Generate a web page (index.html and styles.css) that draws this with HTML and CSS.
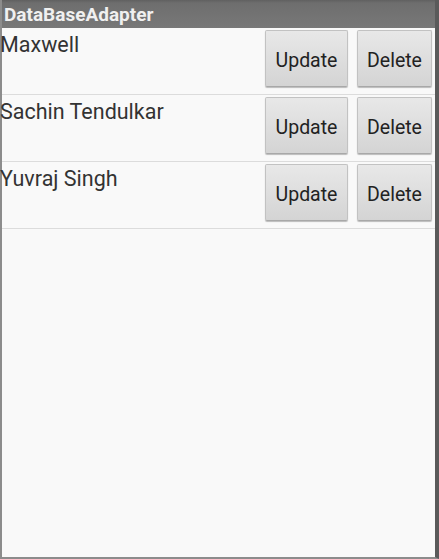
FILE: index.html
```html
<!DOCTYPE html>
<html>
<head>
<meta charset="utf-8">
<link rel="stylesheet" href="styles.css">
</head>
<body>
<div class="screen">
  <div class="titlebar"><span class="title">DataBaseAdapter</span></div>
  <div class="content">
    <div class="row">
      <div class="name">Maxwell</div>
      <div class="actions">
        <button class="btn btn-update">Update</button>
        <button class="btn btn-delete">Delete</button>
      </div>
    </div>
    <div class="row">
      <div class="name">Sachin Tendulkar</div>
      <div class="actions">
        <button class="btn btn-update">Update</button>
        <button class="btn btn-delete">Delete</button>
      </div>
    </div>
    <div class="row">
      <div class="name">Yuvraj Singh</div>
      <div class="actions">
        <button class="btn btn-update">Update</button>
        <button class="btn btn-delete">Delete</button>
      </div>
    </div>
  </div>
</div>
</body>
</html>
```
FILE: styles.css
```css
* { box-sizing: border-box; }
html, body { margin: 0; padding: 0; }
body {
  width: 439px;
  height: 559px;
  overflow: hidden;
  font-family: Roboto, "Noto Sans", sans-serif;
  background: #8a8a8a;
}
.screen {
  width: 439px;
  height: 559px;
  display: flex;
  flex-direction: column;
  border-left: 2px solid #8c8c8c;
  border-right: 4px solid #5a5a5a;
  border-bottom: 2px solid #8c8c8c;
  background: #f9f9f9;
}
.titlebar {
  height: 28px;
  flex: none;
  background: linear-gradient(#606060 0, #6e6e6e 3px, #787878 100%);
  display: flex;
  align-items: center;
  padding-left: 2px;
}
.title {
  color: #f0f0f0;
  font-weight: bold;
  font-size: 19px;
  margin-top: 1px;
}
.content {
  flex: 1;
  background: #f9f9f9;
}
.row {
  height: 67px;
  border-bottom: 1px solid #dcdcdc;
  display: flex;
  justify-content: space-between;
  align-items: flex-start;
}
.name {
  font-size: 21.5px;
  line-height: 24px;
  color: #333;
  margin-left: -2px;
  padding-top: 5px;
}
.actions {
  display: flex;
  gap: 9px;
  padding-top: 2px;
  margin-right: 3px;
}
.btn {
  height: 57px;
  font-family: Roboto, "Noto Sans", sans-serif;
  font-size: 19.5px;
  color: #222;
  background: linear-gradient(#e8e8e8, #d4d4d4);
  border: 1px solid #c2c2c2;
  border-bottom-color: #a8a8a8;
  border-radius: 2px;
  box-shadow: 0 1px 1px rgba(0,0,0,0.25);
  padding: 3px 0 0;
}
.btn-update { width: 83px; }
.btn-delete { width: 75px; }
```
